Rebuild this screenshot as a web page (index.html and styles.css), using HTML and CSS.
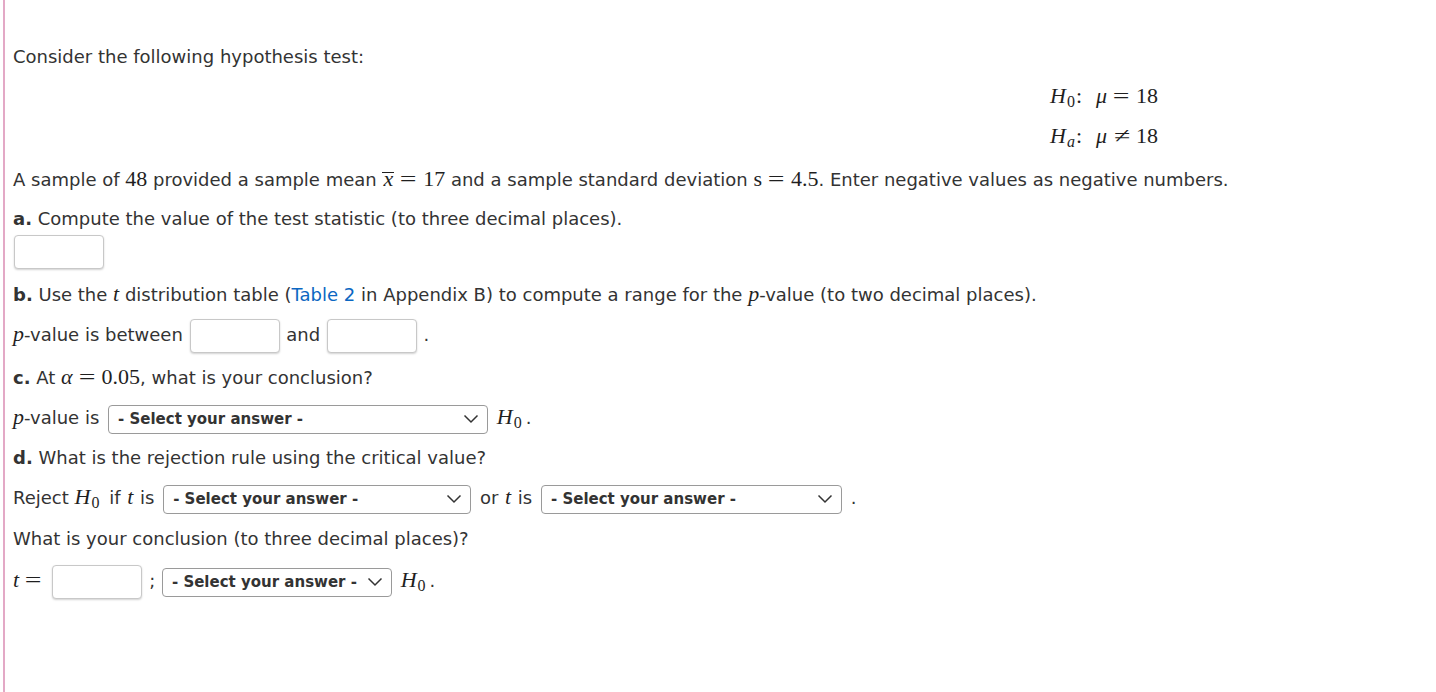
FILE: index.html
```html
<!DOCTYPE html>
<html>
<head>
<meta charset="utf-8">
<link rel="stylesheet" href="styles.css">
</head>
<body>
<div class="page">
  <div class="row r-consider">Consider the following hypothesis test:</div>
  <div class="row r-h0 hyp"><span class="mth"><i>H</i><sub>0</sub><span class="colon">:</span><i class="sp">μ</i><span class="op"><span class="opg">=</span></span>18</span></div>
  <div class="row r-ha hyp"><span class="mth"><i>H</i><sub><i>a</i></sub><span class="colon">:</span><i class="sp">μ</i><span class="op"><span class="opg">≠</span></span>18</span></div>
  <div class="row r-sample">A sample of <span class="mth">48</span> provided a sample mean <span class="mth"><i class="bar">x</i><span class="op"><span class="opg">=</span></span>17</span> and a sample standard deviation <span class="mth">s<span class="op"><span class="opg">=</span></span>4.5</span>. Enter negative values as negative numbers.</div>
  <div class="row r-a"><b>a.</b> Compute the value of the test statistic (to three decimal places).</div>
  <div class="row r-ainput"><span class="inp"></span></div>
  <div class="row r-b"><b>b.</b> Use the <span class="mth"><i>t</i></span> distribution table (<a class="lnk">Table 2</a> in Appendix B) to compute a range for the <span class="mth"><i>p</i></span>-value (to two decimal places).</div>
  <div class="row r-between"><span class="mth"><i>p</i></span>-value is between <span class="inp"></span> and <span class="inp"></span> <span class="dot">.</span></div>
  <div class="row r-c"><b>c.</b> At <span class="mth"><i>α</i><span class="op"><span class="opg">=</span></span>0.05</span>, what is your conclusion?</div>
  <div class="row r-csel"><span class="mth"><i>p</i></span>-value is <span class="sel w380"><span class="seltext">- Select your answer -</span><svg width="16" height="10" viewBox="0 0 16 10"><path d="M1.5 1.5 L8 8 L14.5 1.5" fill="none" stroke="#333" stroke-width="1.5"/></svg></span> <span class="mth"><i>H</i><sub>0</sub></span>.</div>
  <div class="row r-d"><b>d.</b> What is the rejection rule using the critical value?</div>
  <div class="row r-dsel">Reject <span class="mth"><i>H</i><sub>0</sub></span> if <span class="mth"><i class="tv">t</i></span> is <span class="sel w308"><span class="seltext">- Select your answer -</span><svg width="16" height="10" viewBox="0 0 16 10"><path d="M1.5 1.5 L8 8 L14.5 1.5" fill="none" stroke="#333" stroke-width="1.5"/></svg></span> or <span class="mth"><i class="tv">t</i></span> is <span class="sel w301"><span class="seltext">- Select your answer -</span><svg width="16" height="10" viewBox="0 0 16 10"><path d="M1.5 1.5 L8 8 L14.5 1.5" fill="none" stroke="#333" stroke-width="1.5"/></svg></span> <span class="dot">.</span></div>
  <div class="row r-what">What is your conclusion (to three decimal places)?</div>
  <div class="row r-t"><span class="mth"><i>t</i><span class="op"><span class="opg">=</span></span></span><span class="inp"></span><span class="semi">;</span> <span class="sel w230"><span class="seltext">- Select your answer -</span><svg width="16" height="10" viewBox="0 0 16 10"><path d="M1.5 1.5 L8 8 L14.5 1.5" fill="none" stroke="#333" stroke-width="1.5"/></svg></span> <span class="mth"><i>H</i><sub>0</sub></span>.</div>
</div>
</body>
</html>
```

FILE: styles.css
```css
html, body {
  margin: 0;
  padding: 0;
  background: #fff;
}
body {
  font-family: "DejaVu Sans", Verdana, sans-serif;
  font-size: 18px;
  color: #333;
}
.page {
  margin-left: 3px;
  border-left: 2px solid #e3a9c6;
  padding: 45px 0 0 8px;
  height: 692px;
  box-sizing: border-box;
  overflow: hidden;
}
.row {
  height: 24px;
  line-height: 24px;
  white-space: nowrap;
}
b { font-weight: bold; }
.mth {
  font-family: "Liberation Serif", "Times New Roman", serif;
  font-size: 22px;
  color: #1f1f1f;
}
.mth i { font-style: italic; }
.mth sub {
  font-size: 16px;
  vertical-align: -4px;
  line-height: 0;
  margin-left: 1px;
  margin-right: 4px;
}
.hyp .mth sub { margin-right: 1px; }
.sp { margin-left: 14px; }
.op {
  display: inline-block;
  width: 29px;
  text-align: center;
}
.opg {
  display: inline-block;
  transform: scaleX(1.35);
}
.bar {
  display: inline-block;
  line-height: 12px;
  border-top: 1.5px solid #1f1f1f;
  padding: 0 1px;
}
.tv { margin: 0 1px; }
.hyp { padding-left: 1037px; }
.r-h0 { margin-top: 15px; }
.r-ha { margin-top: 16px; }
.r-sample { margin-top: 19px; }
.r-a { margin-top: 16px; }
.r-ainput { margin-top: 3px; height: 34px; line-height: 34px; }
.r-b { margin-top: 14px; }
.r-between { margin-top: 11px; height: 34px; line-height: 34px; }
.r-c { margin-top: 14px; }
.r-csel { margin-top: 13px; height: 29px; line-height: 29px; }
.r-d { margin-top: 15px; }
.r-dsel { margin-top: 12px; height: 29px; line-height: 29px; }
.r-what { margin-top: 16px; }
.r-t { margin-top: 12px; height: 34px; line-height: 34px; }
.inp {
  display: inline-block;
  vertical-align: middle;
  width: 88px;
  height: 32px;
  border: 1px solid #c8c8c8;
  border-radius: 4px;
  box-shadow: 0 1px 2px rgba(0,0,0,0.18);
  background: #fff;
  box-sizing: content-box;
  margin: 0 1px;
}
.r-t .inp { margin-left: 4px; }
.semi { margin-left: 6px; }
.lnk { color: #0b67c2; text-decoration: none; }
.sel {
  display: inline-flex;
  vertical-align: middle;
  align-items: center;
  justify-content: space-between;
  height: 27px;
  border: 1px solid #9a9a9a;
  border-radius: 4px;
  box-sizing: content-box;
  padding: 0 8px 0 9px;
  margin: 0 3px;
  font-weight: bold;
  font-size: 15px;
  line-height: 27px;
  color: #333;
  background: #fff;
}
.r-t .sel { margin-left: 1px; }
.w380 { width: 361px; }
.w308 { width: 289px; }
.w301 { width: 282px; }
.w230 { width: 211px; }
```
